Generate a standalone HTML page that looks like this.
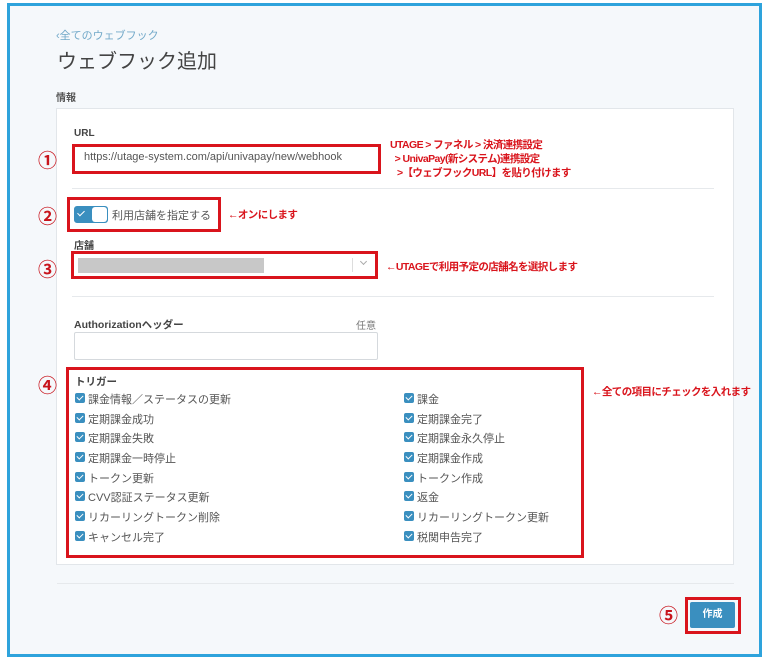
<!DOCTYPE html>
<html><head><meta charset="utf-8"><style>
*{margin:0;padding:0;box-sizing:border-box}
body{width:768px;height:662px;background:#fff;font-family:"Liberation Sans","Noto Sans CJK JP",sans-serif;position:relative;overflow:hidden;color:#444}
.a{position:absolute;white-space:nowrap}
.frame{position:absolute;left:7px;top:3px;width:755px;height:654px;border:3px solid #2ea3dc;background:#f5f8fb}
.card{position:absolute;left:56px;top:108px;width:678px;height:457px;background:#fff;border:1px solid #e2e6ea}
.red{position:absolute;border:3px solid #d9141c}
.rt{color:#d9141c;font-weight:bold;font-size:10.5px;letter-spacing:-0.6px}
.num{color:#c8141c;font-size:19px;font-weight:bold}
.hr{position:absolute;height:1px;background:#e6e9ec}
.cb{position:absolute;width:10px;height:10px;border-radius:2px;background:#3a8fbf}
.cb:after{content:"";position:absolute;left:3px;top:1px;width:3px;height:5px;border:solid #fff;border-width:0 1.3px 1.3px 0;transform:rotate(45deg)}
.lb{font-size:11px;color:#555}
</style></head><body>
<div class="frame"></div>
<div class="a" style="left:56px;top:27px;font-size:11px;color:#72a9c9">‹全てのウェブフック</div>
<div class="a" style="left:57px;top:45px;font-size:20px;color:#444">ウェブフック追加</div>
<div class="a" style="left:56px;top:89px;font-size:10px;font-weight:bold;color:#555">情報</div>
<div class="card"></div>
<div class="a" style="left:74px;top:128px;font-size:10px;font-weight:bold;color:#444">URL</div>
<div class="red" style="left:72px;top:144px;width:309px;height:30px"></div>
<div class="a" style="left:84px;top:151px;font-size:11px;color:#555;width:290px;overflow:hidden">https://utage-system.com/api/univapay/new/webhook</div>
<div class="a num" style="left:38px;top:146px">①</div>
<div class="a rt" style="left:390px;top:138px;line-height:14px">UTAGE &gt; ファネル &gt; 決済連携設定<br>&nbsp;&nbsp;&gt; UnivaPay(新システム)連携設定<br>&nbsp;&nbsp;&nbsp;&gt;【ウェブフックURL】を貼り付けます</div>
<div class="hr" style="left:72px;top:188px;width:642px"></div>
<div class="a num" style="left:38px;top:202px">②</div>
<div class="red" style="left:67px;top:197px;width:154px;height:35px"></div>
<div class="a" style="left:74px;top:206px;width:34px;height:17px;border:1px solid #3a8fbf;border-radius:3px;background:#3a8fbf"></div>
<div class="a" style="left:92px;top:207px;width:15px;height:15px;background:#fff;border-radius:3px"></div>
<div class="a" style="left:79px;top:209px;width:4px;height:7px;border:solid #fff;border-width:0 1.5px 1.5px 0;transform:rotate(45deg)"></div>
<div class="a" style="left:112px;top:207px;font-size:11px;color:#555">利用店舗を指定する</div>
<div class="a rt" style="left:228px;top:207px">←オンにします</div>
<div class="a" style="left:74px;top:237px;font-size:10px;font-weight:bold;color:#444">店舗</div>
<div class="a num" style="left:38px;top:255px">③</div>
<div class="red" style="left:71px;top:251px;width:307px;height:28px"></div>
<div class="a" style="left:78px;top:258px;width:186px;height:15px;background:#c8c8c8"></div>
<div class="a" style="left:352px;top:258px;width:1px;height:14px;background:#ddd"></div>
<div class="a" style="left:361px;top:259px;width:5px;height:5px;border:solid #aaa;border-width:0 1px 1px 0;transform:rotate(45deg)"></div>
<div class="a rt" style="left:386px;top:259px">←UTAGEで利用予定の店舗名を選択します</div>
<div class="hr" style="left:72px;top:296px;width:642px"></div>
<div class="a" style="left:74px;top:317px;font-size:10.5px;font-weight:bold;color:#444">Authorizationヘッダー</div>
<div class="a" style="left:356px;top:317px;font-size:10px;color:#777">任意</div>
<div class="a" style="left:74px;top:332px;width:304px;height:28px;border:1px solid #d5d9dd;border-radius:2px;background:#fff"></div>
<div class="a num" style="left:38px;top:371px">④</div>
<div class="red" style="left:66px;top:367px;width:518px;height:191px"></div>
<div class="a" style="left:75px;top:374px;font-size:10.5px;font-weight:bold;color:#444">トリガー</div>
<div class="a rt" style="left:592px;top:384px">←全ての項目にチェックを入れます</div>
<div class="hr" style="left:57px;top:583px;width:677px"></div>
<div class="a num" style="left:659px;top:601px">⑤</div>
<div class="red" style="left:685px;top:597px;width:56px;height:37px"></div>
<div class="a" style="left:690px;top:602px;width:45px;height:26px;background:#3a8fbf;border-radius:2px;color:#fff;font-size:10px;font-weight:bold;text-align:center;line-height:26px">作成</div>

<div class="cb" style="left:75px;top:393px"></div><div class="a lb" style="left:88px;top:391px">課金情報／ステータスの更新</div>
<div class="cb" style="left:404px;top:393px"></div><div class="a lb" style="left:417px;top:391px">課金</div>
<div class="cb" style="left:75px;top:413px"></div><div class="a lb" style="left:88px;top:411px">定期課金成功</div>
<div class="cb" style="left:404px;top:413px"></div><div class="a lb" style="left:417px;top:411px">定期課金完了</div>
<div class="cb" style="left:75px;top:432px"></div><div class="a lb" style="left:88px;top:430px">定期課金失敗</div>
<div class="cb" style="left:404px;top:432px"></div><div class="a lb" style="left:417px;top:430px">定期課金永久停止</div>
<div class="cb" style="left:75px;top:452px"></div><div class="a lb" style="left:88px;top:450px">定期課金一時停止</div>
<div class="cb" style="left:404px;top:452px"></div><div class="a lb" style="left:417px;top:450px">定期課金作成</div>
<div class="cb" style="left:75px;top:472px"></div><div class="a lb" style="left:88px;top:470px">トークン更新</div>
<div class="cb" style="left:404px;top:472px"></div><div class="a lb" style="left:417px;top:470px">トークン作成</div>
<div class="cb" style="left:75px;top:491px"></div><div class="a lb" style="left:88px;top:489px">CVV認証ステータス更新</div>
<div class="cb" style="left:404px;top:491px"></div><div class="a lb" style="left:417px;top:489px">返金</div>
<div class="cb" style="left:75px;top:511px"></div><div class="a lb" style="left:88px;top:509px">リカーリングトークン削除</div>
<div class="cb" style="left:404px;top:511px"></div><div class="a lb" style="left:417px;top:509px">リカーリングトークン更新</div>
<div class="cb" style="left:75px;top:531px"></div><div class="a lb" style="left:88px;top:529px">キャンセル完了</div>
<div class="cb" style="left:404px;top:531px"></div><div class="a lb" style="left:417px;top:529px">税関申告完了</div>
</body></html>
